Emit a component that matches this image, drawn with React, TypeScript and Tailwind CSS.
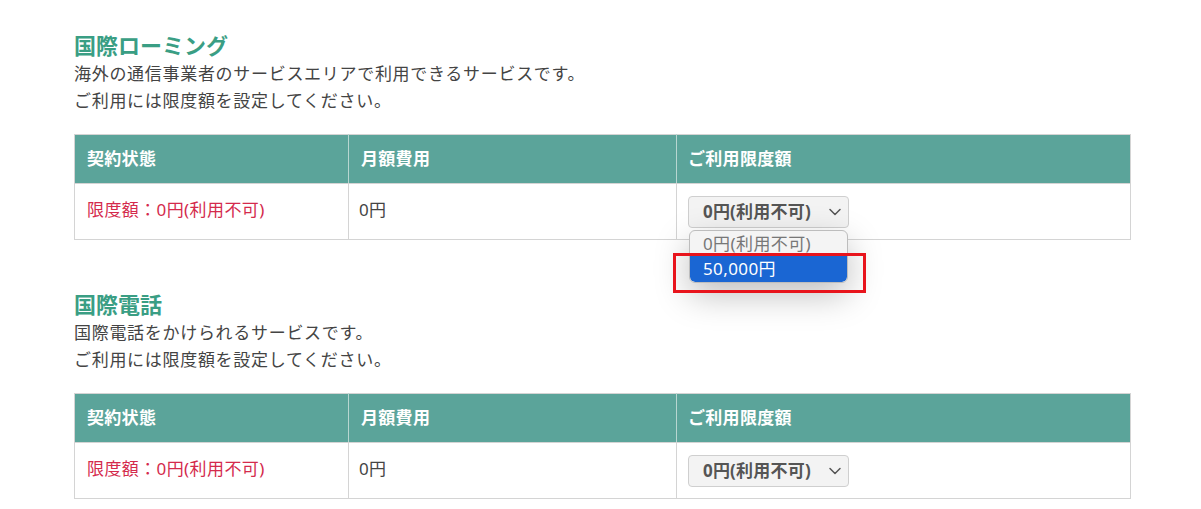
import { ChevronDown } from "lucide-react";

const font = {
  fontFamily: '"Noto Sans", "Noto Sans CJK JP", sans-serif',
};

const Select = ({ open }: { open?: boolean }) => (
  <div className="relative w-[161px]">
    <div className="h-[32px] rounded-[4px] border border-[#cfcfcf] bg-[#f3f3f3] flex items-center justify-between pl-[14px] pr-[3px] text-[17px] tracking-[0.2px] font-bold text-[#555]">
      <span>0円(利用不可)</span>
      <ChevronDown className="w-[20px] h-[20px] text-[#555]" strokeWidth={1.8} />
    </div>
    {open && (
      <>
        <div className="absolute left-[1px] top-[34px] w-[159px] z-10 rounded-[6px] border border-[#bdbdbd] bg-[#f4f4f4] shadow-[0_12px_34px_rgba(0,0,0,0.25)] overflow-hidden text-[17px] tracking-[0.4px]">
          <div className="h-[25px] leading-[25px] pl-[13px] text-[#777]">0円(利用不可)</div>
          <div className="h-[26px] leading-[26px] pl-[13px] bg-[#1a66d3] text-white rounded-b-[5px]">
            50,000円
          </div>
        </div>
        <div className="absolute -left-[15px] top-[57px] w-[193px] h-[40px] z-20 border-[3px] border-[#e8141c] pointer-events-none" />
      </>
    )}
  </div>
);

const Section = ({
  title,
  lead,
  open,
  className,
}: {
  title: string;
  lead: string;
  open?: boolean;
  className?: string;
}) => (
  <section className={className}>
    <h2 className="text-[22px] leading-[30px] font-bold text-[#3a9e84]">{title}</h2>
    <p className="text-[17px] leading-[27px] tracking-[0.7px] text-[#444]">
      {lead}
      <br />
      ご利用には限度額を設定してください。
    </p>
    <table className="mt-[20px] w-full border-collapse table-fixed">
      <colgroup>
        <col className="w-[274px]" />
        <col className="w-[328px]" />
        <col />
      </colgroup>
      <thead>
        <tr className="h-[49px] bg-[#5ba49a] text-white text-[17px] tracking-[0.3px] font-bold text-left">
          <th className="border border-[#d4d4d4] border-r-[#b8d6d1] px-[12px] font-bold">契約状態</th>
          <th className="border border-[#d4d4d4] border-r-[#b8d6d1] px-[12px] font-bold">月額費用</th>
          <th className="border border-[#d4d4d4] px-[11px] font-bold">ご利用限度額</th>
        </tr>
      </thead>
      <tbody>
        <tr className="text-[17px] tracking-[0.4px]">
          <td className="border border-[#d4d4d4] px-[12px] pt-[12px] pb-[12px] align-top leading-[28px] text-[#d42a4c]">
            限度額：0円(利用不可)
          </td>
          <td className="border border-[#d4d4d4] px-[10px] pt-[12px] pb-[12px] align-top leading-[28px] text-[#444]">
            0円
          </td>
          <td className="border border-[#d4d4d4] px-[11px] pt-[12px] pb-[11px] align-top">
            <Select open={open} />
          </td>
        </tr>
      </tbody>
    </table>
  </section>
);

export default function App() {
  return (
    <div className="w-[1201px] h-[509px] bg-white overflow-hidden" style={font}>
      <div className="ml-[74px] w-[1057px] pt-[30px]">
        <Section
          title="国際ローミング"
          lead="海外の通信事業者のサービスエリアで利用できるサービスです。"
          open
        />
        <Section
          className="mt-[49px]"
          title="国際電話"
          lead="国際電話をかけられるサービスです。"
        />
      </div>
    </div>
  );
}
